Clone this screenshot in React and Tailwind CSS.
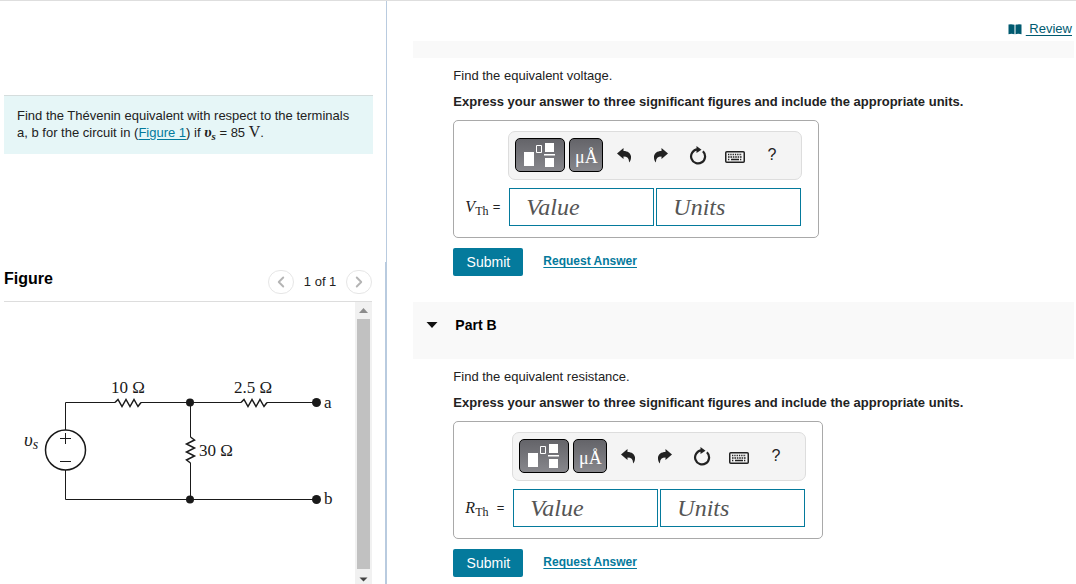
import { useState } from "react";
import { ChevronLeft, ChevronRight } from "lucide-react";

const toolButton =
  "flex h-[34px] items-center justify-center rounded-[5px] border border-black bg-linear-to-b from-[#646469] to-[#87878c] text-white";
const iconButton = "flex h-[34px] w-[37px] items-center justify-center text-[#222222]";
const fieldInput =
  "h-[38px] w-[145px] border border-[#047a9c] bg-white pl-4 font-['Liberation_Serif',serif] text-2xl italic text-[#333333] outline-none placeholder:text-[#555555]";

function App() {
  return (
    <div className="flex min-h-screen border-t border-[#dedede] bg-white font-['Liberation_Sans',Arial,sans-serif] text-[13px] leading-4 text-[#222222]">
      <ProblemPanel />
      <main className="flex-1 pr-[2px] pb-2 pl-[26px]">
        <div className="flex h-10 justify-end pt-5 pr-[2px]">
          <a href="#review" className="flex h-4 items-center gap-1 text-[#005a70]">
            <BookIcon />
            <span className="whitespace-pre underline underline-offset-2"> Review</span>
          </a>
        </div>
        <div className="h-[17px] bg-[#f9f9f9]" />
        <AnswerPart id="voltage" quantity="voltage" symbol="V" labelWidth="w-[43px]" />

        <h2 className="mt-[26px] flex h-[57px] items-start bg-[#f9f9f9] pt-[15px] pl-[13px] text-sm leading-4 font-bold text-black">
          <button type="button" className="flex items-center gap-[17px]">
            <svg width="12" height="6" viewBox="0 0 12 6" aria-hidden="true">
              <path d="M0.500 0h11L6 6z" fill="#111111" />
            </svg>
            Part B
          </button>
        </h2>
        <AnswerPart id="resistance" quantity="resistance" symbol="R" labelWidth="w-[47px]" />
      </main>
    </div>
  );
}

function ProblemPanel() {
  return (
    <aside className="flex w-[36%] shrink-0 flex-col">
      <div className="h-[261px] border-r border-[#b9cbdf] pt-[94px] pr-[13px] pl-1">
        <p className="border-t border-[#d5dddd] bg-[#e6f6f7] px-[13px] pt-[11px] pb-[13px] leading-[17px]">
          Find the Thévenin equivalent with respect to the terminals a, b for the circuit in (
          <a href="#figure" className="text-[#047a9c] underline underline-offset-2">Figure 1</a>) if{" "}
          <span className="font-['Liberation_Serif',serif] font-bold italic">
            <span className="text-[15px] leading-[0px]">υ</span>
            <sub className="text-[11px]">s</sub>
          </span>{" "}
          = 85 <span className="font-['Liberation_Serif',serif] text-base leading-[0px]">V</span>.
        </p>
      </div>

      <section id="figure" className="flex flex-1 flex-col border-r-2 border-[#b9cbdf] pr-[13px] pl-1">
        <header className="flex h-10 items-center justify-between border-b border-[#dddddd]">
          <h2 className="pb-[6px] text-base font-bold text-black">Figure</h2>
          <div className="flex items-center gap-[10px]">
            <PagerButton label="Previous figure">
              <ChevronLeft size={18} strokeWidth={2.500} />
            </PagerButton>
            <span>1 of 1</span>
            <PagerButton label="Next figure">
              <ChevronRight size={18} strokeWidth={2.500} />
            </PagerButton>
          </div>
        </header>
        <div className="flex flex-1">
          <div className="flex-1 pt-[68px]">
            <Circuit />
          </div>
          <div className="flex w-[17px] flex-col items-center bg-[#f1f1f1]" aria-hidden="true">
            <svg width="17" height="17" viewBox="0 0 17 17">
              <path d="M4 11h9L8.500 6z" fill="#8c8c8c" />
            </svg>
            <div className="w-[13px] flex-1 bg-[#c1c1c1]" />
            <svg width="17" height="16" viewBox="0 0 17 16">
              <path d="M4.500 8.500h8l-4 4z" fill="#444444" />
            </svg>
          </div>
        </div>
      </section>
    </aside>
  );
}

function PagerButton({ label, children }) {
  return (
    <button
      type="button"
      aria-label={label}
      className="flex h-6 w-[26px] items-center justify-center rounded-full border border-[#e6e6e6] text-[#b4b4b4]"
    >
      {children}
    </button>
  );
}

function AnswerPart({ id, quantity, symbol, labelWidth }) {
  const [value, setValue] = useState("");
  const [units, setUnits] = useState("");

  return (
    <section className="pt-[10px] pl-10">
      <p>Find the equivalent {quantity}.</p>
      <p className="mt-[10px] font-bold">
        Express your answer to three significant figures and include the appropriate units.
      </p>

      <div className="mt-[10px] flex w-fit items-end rounded-[5px] border border-[#a9a9a9] pt-[10px] pr-4 pb-[11px] pl-[11px]">
        <label htmlFor={`${id}-value`} className={`flex h-[38px] items-center justify-between pr-2 ${labelWidth}`}>
          <span className="font-['Liberation_Serif',serif]">
            <i className="text-base leading-4">{symbol}</i>
            <sub className="text-xs">Th</sub>
          </span>
          =
        </label>
        <div>
          <Toolbar />
          <div className="mt-2 flex gap-[2px] px-px">
            <input
              id={`${id}-value`}
              type="text"
              placeholder="Value"
              className={fieldInput}
              value={value}
              onChange={(e) => setValue(e.target.value)}
            />
            <input
              type="text"
              aria-label="Units"
              placeholder="Units"
              className={fieldInput}
              value={units}
              onChange={(e) => setUnits(e.target.value)}
            />
          </div>
        </div>
      </div>

      <div className="mt-[10px] flex items-center gap-5">
        <button type="button" className="h-7 w-[70px] rounded-[2px] bg-[#047a9c] text-sm text-white">
          Submit
        </button>
        <a href="#request" className="pb-[2px] text-xs font-bold text-[#047a9c] underline underline-offset-2">
          Request Answer
        </a>
      </div>
    </section>
  );
}

function Toolbar() {
  return (
    <div className="flex h-[49px] items-start rounded-[7px] border border-[#dddddd] bg-[#f4f4f4] px-[6px] pt-[6px]">
      <button type="button" aria-label="Templates" className={`${toolButton} w-[50px]`}>
        <svg width="32" height="26" viewBox="0 0 32 26" fill="white">
          <path d="M0 10h10v14H0zM21 1h9v9h-9zM20 12h11v1.500H20zM21 16h9v9h-9z" />
          <path d="M12.500 3.500h5v7h-5z" fill="none" stroke="white" />
        </svg>
      </button>
      <button
        type="button"
        aria-label="Symbols"
        className={`${toolButton} mr-[2px] ml-1 w-[34px] pt-1 font-['Liberation_Serif',serif] text-lg leading-4`}
      >
        μÅ
      </button>
      <button type="button" aria-label="Undo" className={iconButton}>
        <svg width="14" height="15" viewBox="0 0 14 15">
          <path d={arrowPath} fill="currentColor" />
        </svg>
      </button>
      <button type="button" aria-label="Redo" className={iconButton}>
        <svg width="14" height="15" viewBox="0 0 14 15">
          <path d={arrowPath} fill="currentColor" transform="matrix(-1 0 0 1 14 0)" />
        </svg>
      </button>
      <button type="button" aria-label="Reset" className={iconButton}>
        <svg width="18" height="19" viewBox="0 0 18 19" fill="none">
          <path d="M13.900 5.300A7 7 0 1 1 8.500 3.400" stroke="currentColor" strokeWidth="2.200" />
          <path d="M7.500 0l5 3.700-5 3.200z" fill="currentColor" />
        </svg>
      </button>
      <button type="button" aria-label="Keyboard shortcuts" className={iconButton}>
        <svg width="20" height="12" viewBox="0 0 20 12" fill="none" className="mt-1" stroke="currentColor">
          <rect x="0.750" y="0.750" width="18.500" height="10.500" rx="1" strokeWidth="1.500" />
          <path d="M3 3.500h14M3 8.500h2M15 8.500h2" strokeWidth="1.300" strokeDasharray="1.300 1" />
          <path d="M3 6h14" strokeWidth="1.300" strokeDasharray="1.600 0.800" />
          <path d="M6 8.500h8" strokeWidth="1.500" />
        </svg>
      </button>
      <button type="button" aria-label="Help" className={`${iconButton} text-base`}>
        ?
      </button>
    </div>
  );
}

const arrowPath = "M0 5.500L6.500 0v3C11.500 3 14.500 6 14 10c-.2 2-1 3.500-2 4.500.3-4-1.500-6-5.500-6V11z";

function BookIcon() {
  return (
    <svg width="14" height="11" viewBox="0 0 14 11" fill="currentColor" aria-hidden="true">
      <path d="M.5 .5Q3.500-.2 6.500 .8V10.200Q3.500 9.300 .5 10.200zM7.500 .8Q10.500-.2 13.500 .5V10.200Q10.500 9.300 7.500 10.200z" />
    </svg>
  );
}

function Circuit() {
  return (
    <svg
      width="351"
      height="150"
      viewBox="4 370 351 150"
      className="font-['Liberation_Serif',serif] text-[17px]"
      role="img"
      aria-label="Circuit with source, three resistors and terminals a and b"
    >
      <g fill="none" stroke="#1a1a1a">
        <path d="M65.500 430V402.500H115M141 402.500H241M267 402.500H316" />
        <path d="M65.500 470V499.500H316M190.500 402V437M190.500 463V499" />
        <path
          d="M115 402.500l3-3 4 7 4-7 4 7 4-7 4 7 3-4M241 402.500l3-3 4 7 4-7 4 7 4-7 4 7 3-4M190.500 437l4 3-8 4 8 4-8 4 8 4-8 4 4 3"
          strokeWidth="1.500"
        />
        <circle cx="65.500" cy="450" r="20" strokeWidth="1.500" />
        <path d="M60 438.500h11M65.500 433v11M60 461.500h11" />
      </g>
      <g fill="#1a1a1a">
        <circle cx="190" cy="402.500" r="4" />
        <circle cx="190" cy="499.500" r="4" />
        <circle cx="316.500" cy="402.500" r="4.500" />
        <circle cx="316.500" cy="499.500" r="4.500" />
        <text x="111" y="393">10 Ω</text>
        <text x="234" y="393">2.5 Ω</text>
        <text x="199" y="456">30 Ω</text>
        <text x="324" y="408">a</text>
        <text x="324" y="504">b</text>
        <text x="24" y="446" fontSize="19" fontStyle="italic">
          υ
          <tspan fontSize="14" dy="3">s</tspan>
        </text>
      </g>
    </svg>
  );
}

export default App;
